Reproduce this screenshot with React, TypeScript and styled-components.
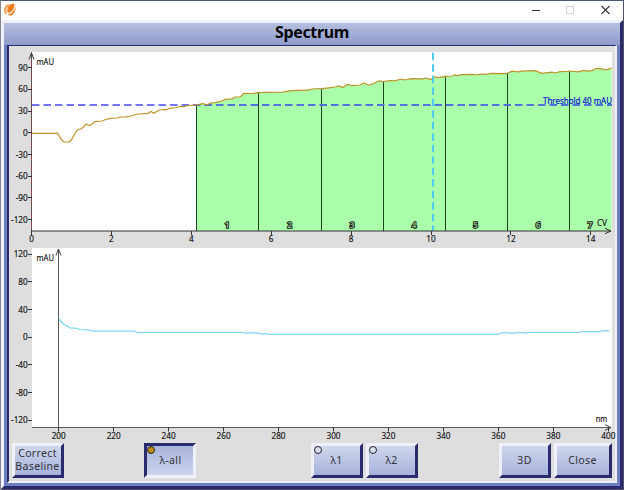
import React from "react";
import styled, { createGlobalStyle, css } from "styled-components";

const Global = createGlobalStyle`
  * { box-sizing: border-box; }
  body { margin: 0; overflow: hidden; background: #4b5670; }
`;

const FONT = '"Noto Sans", "Open Sans", "DejaVu Sans", sans-serif';

const Window = styled.div`
  width: 624px;
  height: 490px;
  padding: 0 1px 1px 0;
  border-top: 1px solid #4c5974;
  border-left: 1px solid #85858b;
  background: #50506a;
  display: flex;
  flex-direction: column;
  font-family: ${FONT};
  color: #222;
`;

const TitleBar = styled.header`
  height: 19px;
  flex: none;
  background: #fff;
  display: flex;
  justify-content: space-between;
`;

const Frame = styled.main`
  flex: 1;
  min-height: 0;
  display: flex;
  flex-direction: column;
  background: #6b80c0;
  border: 3px solid;
  border-color: #f0f0fd #2b2a6c #2b2a6c #f0f0fd;
`;

const Heading = styled.h1`
  margin: 0;
  height: 22px;
  flex: none;
  background: linear-gradient(#b5c0e1, #8e9aca);
  text-align: center;
  font-size: 16px;
  line-height: 19px;
  font-weight: 700;
  letter-spacing: -0.35px;
  color: #050505;
`;

const Panel = styled.section`
  flex: 1;
  min-height: 0;
  margin: 0 3px 3px 3px;
  border: 2px solid;
  border-top-width: 1px;
  border-color: #2b2a6c #f0f0fa #f0f0fa #2b2a6c;
  background: #dedede;
  display: flex;
  flex-direction: column;
`;

const Plot = styled.svg`
  display: block;
  flex: none;
  overflow: visible;
  font-family: ${FONT};
  font-size: 8.2px;
  fill: #151515;
`;

const TickLabel = styled.text`
  stroke: #151515;
  stroke-width: 0.15px;
`;

const Buttons = styled.footer`
  display: flex;
  padding: 3px 0 0 3px;
`;

const PushButton = styled.button<{ $pressed?: boolean; $gap?: number; $width?: number }>`
  position: relative;
  width: ${(p) => p.$width ?? 52}px;
  height: 35px;
  flex: none;
  margin: 0 0 0 ${(p) => p.$gap ?? 0}px;
  padding: 0 1px 1px 0;
  border: 3px solid;
  border-color: #f0f0fd #2b2a6c #2b2a6c #f0f0fd;
  background: linear-gradient(#d0d6eb, #a6b2db);
  font-family: ${FONT};
  font-size: 10.5px;
  line-height: 13px;
  letter-spacing: 0.35px;
  white-space: nowrap;
  display: flex;
  align-items: center;
  justify-content: center;
  color: #33333b;
  ${(p) =>
    p.$pressed &&
    css`
      padding: 0 0 0 1px;
      border-color: #2b2a6c #f0f0fd #f0f0fd #2b2a6c;
      background: linear-gradient(#a8b4dc, #ccd4ec);
    `}
`;

const Lamp = styled.span<{ $on?: boolean }>`
  position: absolute;
  left: 0;
  top: 0;
  width: 8px;
  height: 8px;
  border: 1px solid #25252d;
  border-radius: 50%;
  background: ${(p) => (p.$on ? "#bd8c08" : "#d9def0")};
`;

type Point = [number, number];
const toPoints = (pts: Point[]) => pts.map((p) => p.join(",")).join(" ");

const absorbance: Point[] = [
  [32, 133.3], [55, 133.3], [56.5, 132.6], [58, 134], [62, 140.5], [64, 142], [69, 142], [71, 140.5],
  [76, 131.5], [78, 129.5], [81, 129], [84, 126.5], [86, 124.3], [90, 125.6], [95, 121.7], [102, 121],
  [105, 119.7], [110, 118.3], [117, 118], [120, 117], [126, 116.8], [131, 116], [138, 114], [148, 113.3],
  [151, 111.5], [154, 113.2], [159, 110], [164, 109.5], [165, 110], [170, 108.3], [176, 107.5],
  [180, 106.5], [184, 106.6], [188, 105.5], [197, 104.8], [203, 103.6], [207, 104.8], [211, 102.8],
  [215, 102.6], [222, 101], [225, 99.3], [232, 98.8], [235, 97], [240, 97], [244, 93.3], [253, 93.5],
  [258, 92.6], [265, 92.3], [283, 92.2], [291, 90.6], [308, 90.2], [312, 89], [322, 88.6],
  [329, 87.8], [335, 87], [339, 86], [343, 87.6], [347, 84.7], [349, 84.5], [352, 85.7], [360, 85],
  [364, 83], [368, 85], [371, 84.7], [379, 80.8], [383, 81.6], [390, 80.5], [395, 80.9], [401, 79],
  [405, 80], [411, 78.6], [423, 78.9], [426, 78.2], [431, 79.6], [434, 77], [439, 77.6], [445, 76.4],
  [452, 76], [455, 75], [457, 75.6], [462, 74.6], [473, 74.4], [476, 75], [481, 74.2], [488, 74.2],
  [491, 73.4], [506, 73.7], [512, 71.2], [518, 71.8], [522, 71.2], [535, 70.6], [542, 73.3],
  [552, 72.1], [555, 73], [560, 71.7], [567, 71.5], [569, 71], [578, 71.8], [584, 70.4], [587, 71.2],
  [592, 70.6], [597, 68.3], [603, 69.1], [605, 69.8], [608, 69.4], [611.5, 68.1],
];

const lambdaTrace: Point[] = [
  [59, 319], [62, 322.5], [64, 324.5], [67, 326], [70, 327.8], [76, 328.2], [80, 329.5], [87, 329.8],
  [94, 331.1], [134, 331.1], [138, 332.5], [244, 332.5], [247, 333.4], [251, 332.7], [260, 333.4],
  [263, 334.3], [265, 333.4], [268, 334.3], [497, 334.3], [503, 332.7], [508, 332.7], [512, 333.4],
  [518, 332.7], [524, 332.5], [527, 333.4], [529, 332.5], [579, 332.5], [582, 331.6],
  [600, 331.6], [604, 330.7], [609.5, 330.7],
];

const fractionEdges = [196.4, 258.5, 321.5, 383.2, 445.4, 507.4, 569.6];
const fractionLabels: [string, number][] = [
  ["1", 227], ["2", 289.5], ["3", 352], ["4", 414], ["5", 475.5], ["6", 538], ["7", 590],
];
const area: Point[] = [
  [196.4, 231],
  [196.4, 104.8],
  ...absorbance.filter(([x]) => x > 196.4),
  [611.5, 231],
];
const heightAt = (x: number) => {
  const i = absorbance.findIndex(([px]) => px >= x);
  const [x0, y0] = absorbance[i - 1];
  const [x1, y1] = absorbance[i];
  return y0 + ((y1 - y0) * (x - x0)) / (x1 - x0);
};

function YTicks({ values, zero, unit }: { values: number[]; zero: number; unit: number }) {
  return (
    <>
      {values.map((v) => {
        const y = zero - v * unit;
        return (
          <g key={v}>
            <path d={`M28 ${Math.floor(y) + 0.5}h4`} stroke="#333" />
            <TickLabel x="27.7" y={y + 3} textAnchor="end">
              {v}
            </TickLabel>
          </g>
        );
      })}
    </>
  );
}

function XTicks({ values, at, y }: { values: number[]; at: (v: number) => number; y: number }) {
  return (
    <>
      {values.map((v) => (
        <g key={v}>
          <path d={`M${Math.floor(at(v)) + 0.5} ${y}v4`} stroke="#333" />
          <TickLabel x={at(v)} y={y + 11.4} textAnchor="middle">
            {v}
          </TickLabel>
        </g>
      ))}
    </>
  );
}

function Chromatogram() {
  return (
    <Plot width="606" height="201" viewBox="9 46 606 201">
      <rect x="32" y="52" width="580" height="179" fill="#fff" />
      <polygon points={toPoints(area)} fill="#aaffaa" />
      {fractionEdges.map((x) => (
        <path key={x} d={`M${Math.floor(x) + 0.5} ${heightAt(x)}V231`} stroke="#1d421d" />
      ))}
      <path d="M32 105H196" stroke="#7474fb" strokeWidth="2" strokeDasharray="7.5 4" />
      <path d="M196 105H612" stroke="#4f72dc" strokeWidth="2" strokeDasharray="7.5 4" strokeDashoffset="3" />
      <polyline points={toPoints(absorbance)} fill="none" stroke="#c0932a" strokeWidth="1.2" />
      <path d="M433 52.7V231" stroke="#4ecbee" strokeWidth="2" strokeDasharray="7.5 4" />
      <path d="M31.5 52V231" stroke="#555" />
      <path d="M31.5 61V231" stroke="#7d4848" strokeDasharray="7.5 4" />
      <path d="M31 231H611" stroke="#333" />
      <path d="M29 59.5 31.5 53 34 59.5" fill="none" stroke="#333" />
      <path d="M605 228.3 611 231 605 233.7" fill="none" stroke="#333" />
      <YTicks values={[90, 60, 30, 0, -30, -60, -90, -120]} zero={132.8} unit={0.7235} />
      <XTicks values={[0, 2, 4, 6, 8, 10, 12, 14]} at={(v) => 31.5 + v * 39.95} y={231} />
      <TickLabel x="36.5" y="64.5" textLength="17.5" lengthAdjust="spacingAndGlyphs">mAU</TickLabel>
      <TickLabel x="597" y="225.5" textLength="10">CV</TickLabel>
      <text x="543" y="103.5" textLength="69" lengthAdjust="spacingAndGlyphs" fill="#1020cc" stroke="#1020cc" strokeWidth="0.2">
        Threshold 40 mAU
      </text>
      {fractionLabels.map(([label, x]) => (
        <text key={label} x={x} y="228.3" textAnchor="middle" fontWeight="700" fill="#80b580" stroke="#151515" strokeWidth="1.7" paintOrder="stroke">
          {label}
        </text>
      ))}
    </Plot>
  );
}

function SpectrumPlot() {
  return (
    <Plot width="606" height="193" viewBox="9 247 606 193">
      <rect x="32" y="248" width="580" height="179" fill="#fff" />
      <path d="M58.5 249V427M32 427.5H611" fill="none" stroke="#5a5a5a" />
      <path d="M56 255.5 58.5 249 61 255.5M605 424.7 611 427.5 605 430.2" fill="none" stroke="#444" />
      <polyline points={toPoints(lambdaTrace)} fill="none" stroke="#7ed6f8" strokeWidth="1.2" />
      <YTicks values={[120, 80, 40, 0, -40, -80, -120]} zero={337.3} unit={0.692} />
      <XTicks values={[200, 220, 240, 260, 280, 300, 320, 340, 360, 380, 400]} at={(v) => 58.7 + (v - 200) * 2.748} y={427.5} />
      <TickLabel x="36.5" y="260.5" textLength="17.5" lengthAdjust="spacingAndGlyphs">mAU</TickLabel>
      <TickLabel x="595.7" y="421.5" textLength="11.5" lengthAdjust="spacingAndGlyphs">nm</TickLabel>
    </Plot>
  );
}

function TitleIcons() {
  return (
    <>
      <svg width="20" height="19" viewBox="1 1 20 19">
        <path d="M7.6 4.2C3 6.3 2.8 13 7 15.4 5.9 11.5 6.3 7.6 9.6 4.2 9 3.8 8.2 3.9 7.6 4.2Z" fill="#f6a45e" />
        <path d="M14.4 3.5C9 3.4 6.4 7.6 7.7 13 12.2 12.3 14.8 8.6 14.4 3.5Z" fill="#f07b1d" />
        <path d="M15.3 5.5C15.2 10.3 12.2 13.4 8 14.1 8.6 15.8 10.4 16.4 12.2 15.1 15 13.2 16.2 9 15.3 5.5Z" fill="#f38732" />
      </svg>
      <svg width="95" height="19" viewBox="528 1 95 19" fill="none">
        <path d="M532 10.5h8" stroke="#333" />
        <rect x="566.5" y="6.5" width="7" height="7" stroke="#d5d5d5" />
        <path d="m601.5 6 8 8m0-8-8 8" stroke="#333" strokeWidth="1.1" />
      </svg>
    </>
  );
}

export default function App() {
  return (
    <Window>
      <Global />
      <TitleBar>
        <TitleIcons />
      </TitleBar>
      <Frame>
        <Heading>Spectrum</Heading>
        <Panel>
          <Chromatogram />
          <SpectrumPlot />
          <Buttons>
            <PushButton>
              Correct
              <br />
              Baseline
            </PushButton>
            <PushButton $pressed $gap={80}>
              <Lamp $on />
              λ-all
            </PushButton>
            <PushButton $gap={115}>
              <Lamp />
              λ1
            </PushButton>
            <PushButton $gap={3}>
              <Lamp />
              λ2
            </PushButton>
            <PushButton $gap={81}>3D</PushButton>
            <PushButton $gap={3} $width={58}>Close</PushButton>
          </Buttons>
        </Panel>
      </Frame>
    </Window>
  );
}
